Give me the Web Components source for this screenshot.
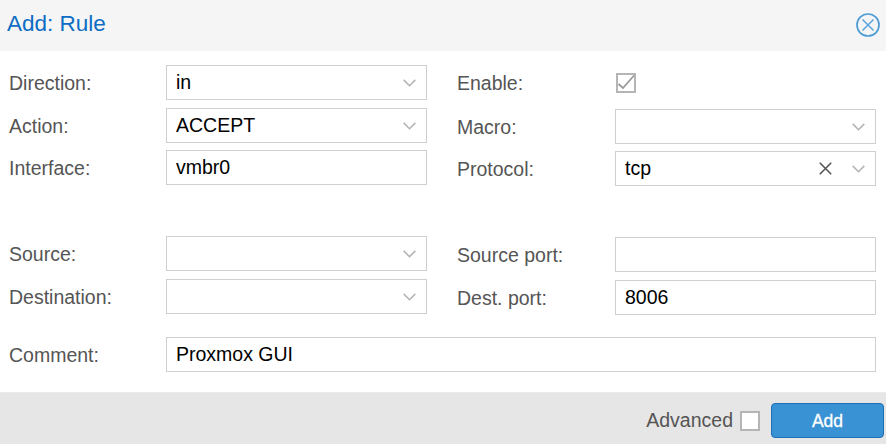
<!DOCTYPE html>
<html>
<head>
<meta charset="utf-8">
<title>Add: Rule</title>
<style>
    html, body { margin: 0; padding: 0; background: #fff; overflow: hidden; }
    body { font-family: "Liberation Sans", Arial, sans-serif; }
</style>
</head>
<body>

<rule-dialog heading="Add: Rule">
    <form-column slot="left">
        <form-field label="Direction:" gap="8"><combo-box value="in"></combo-box></form-field>
        <form-field label="Action:" gap="7"><combo-box value="ACCEPT"></combo-box></form-field>
        <form-field label="Interface:" gap="51"><text-box value="vmbr0"></text-box></form-field>
        <form-field label="Source:" gap="8"><combo-box></combo-box></form-field>
        <form-field label="Destination:" gap="0"><combo-box></combo-box></form-field>
    </form-column>
    <form-column slot="right">
        <form-field label="Enable:" gap="8" tall><check-box checked></check-box></form-field>
        <form-field label="Macro:" gap="7"><combo-box></combo-box></form-field>
        <form-field label="Protocol:" gap="51"><combo-box value="tcp" clearable></combo-box></form-field>
        <form-field label="Source port:" gap="8"><text-box></text-box></form-field>
        <form-field label="Dest. port:" gap="0"><text-box value="8006"></text-box></form-field>
    </form-column>
    <form-field slot="wide" label="Comment:" gap="0"><text-box value="Proxmox GUI"></text-box></form-field>
    <check-box slot="footer" label="Advanced"></check-box>
    <push-button slot="footer">Add</push-button>
</rule-dialog>

<script>
const chevron = `<svg width="13" height="8" viewBox="0 0 13 8"><path d="M.7.9 6.5 6.7 12.3.9" fill="none" stroke="#b4b4b4" stroke-width="1.6"/></svg>`;

class RuleDialog extends HTMLElement {
    constructor() {
        super();
        this.attachShadow({ mode: 'open' });
        this.shadowRoot.innerHTML = `
            <style>
                :host { display: flex; flex-direction: column; width: 886px; height: 444px; background: #fff; font-family: "Liberation Sans", Arial, sans-serif; }
                header { display: flex; align-items: center; justify-content: space-between; height: 51px; flex: none; box-sizing: border-box; padding: 0 6px 3px 7px; background: #f5f5f5; }
                h1 { margin: 0; font-size: 22.5px; font-weight: normal; color: #0d6dc4; }
                header svg { display: block; margin-top: 2px; }
                main { flex: 1; box-sizing: border-box; padding: 14px 10px 0 9px; }
                .cols { display: grid; grid-template-columns: 418px 419px; column-gap: 30px; }
                .wide { margin-top: 22px; }
                footer { display: flex; align-items: center; justify-content: flex-end; gap: 11px; height: 52px; flex: none; box-sizing: border-box; padding: 4px 2px 0 0; background: #e6e6e6; border-top: 1px solid #ececec; }
            </style>
            <header>
                <h1></h1>
                <svg width="24" height="24" viewBox="0 0 24 24"><circle cx="12" cy="12" r="11" fill="none" stroke="#4c9cd6" stroke-width="1.7"/><path d="M6.5 6.5 17.5 17.5M17.5 6.5 6.5 17.5" stroke="#5aa5dc" stroke-width="1.5"/></svg>
            </header>
            <main>
                <div class="cols"><slot name="left"></slot><slot name="right"></slot></div>
                <div class="wide"><slot name="wide"></slot></div>
            </main>
            <footer><slot name="footer"></slot></footer>`;
        this.shadowRoot.querySelector('h1').textContent = this.getAttribute('heading');
    }
}

class FormColumn extends HTMLElement {
    constructor() {
        super();
        this.attachShadow({ mode: 'open' });
        this.shadowRoot.innerHTML = `<style>:host { display: flex; flex-direction: column; }</style><slot></slot>`;
    }
}

class FormField extends HTMLElement {
    constructor() {
        super();
        this.attachShadow({ mode: 'open' });
        this.shadowRoot.innerHTML = `
            <style>
                :host { display: flex; align-items: center; height: 35px; font-size: 19.5px; color: #555; }
                :host([tall]) { height: 36px; }
                label { flex: none; width: 157px; padding-top: 2px; }
                :host([tall]) label { padding-top: 0; }
                ::slotted(*) { flex: 1; }
            </style>
            <label></label><slot></slot>`;
        this.shadowRoot.querySelector('label').textContent = this.getAttribute('label');
        this.style.marginBottom = this.getAttribute('gap') + 'px';
    }
    connectedCallback() {
        if (this.parentElement.getAttribute('slot') === 'right') {
            this.shadowRoot.querySelector('label').style.width = '158px';
        }
    }
}

// shared box for text-box and combo-box
const fieldCss = `
    :host { display: flex; align-items: center; box-sizing: border-box; height: 35px; background: #fff; border: 1px solid #cfcfcf; color: #000; font-size: 19.5px; }
    .val { flex: 1; padding-left: 9px; white-space: pre; }
`;

class TextBox extends HTMLElement {
    constructor() {
        super();
        this.attachShadow({ mode: 'open' });
        this.shadowRoot.innerHTML = `<style>${fieldCss}</style><div class="val"></div>`;
        this.shadowRoot.querySelector('.val').textContent = this.getAttribute('value') || '';
    }
}

class ComboBox extends HTMLElement {
    constructor() {
        super();
        this.attachShadow({ mode: 'open' });
        const clear = this.hasAttribute('clearable')
            ? `<svg class="clear" width="13" height="13" viewBox="0 0 13 13"><path d="M.8.8 12.2 12.2M12.2.8.8 12.2" stroke="#555" stroke-width="1.6"/></svg>`
            : '';
        this.shadowRoot.innerHTML = `
            <style>
                ${fieldCss}
                svg { display: block; flex: none; }
                .arrow { margin-right: 10px; }
                .clear { margin-right: 20px; }
            </style>
            <div class="val"></div>${clear}<span class="arrow">${chevron}</span>`;
        this.shadowRoot.querySelector('.val').textContent = this.getAttribute('value') || '';
    }
}

class CheckBox extends HTMLElement {
    constructor() {
        super();
        this.attachShadow({ mode: 'open' });
        const tick = this.hasAttribute('checked')
            ? `<path d="M2.5 11 7 15 18 2.5" fill="none" stroke="#9a9a9a" stroke-width="1.8"/>`
            : '';
        this.shadowRoot.innerHTML = `
            <style>
                :host { display: inline-flex; align-items: center; gap: 7px; font-size: 19.5px; color: #555; }
                svg { display: block; flex: none; margin-left: 1px; }
                span:empty { display: none; }
                span { margin-right: -1px; }
            </style>
            <span></span>
            <svg width="20" height="20" viewBox="0 0 20 20"><rect x="1" y="1" width="18" height="18" fill="#fff" stroke="#b5b5b5" stroke-width="2"/>${tick}</svg>`;
        this.shadowRoot.querySelector('span').textContent = this.getAttribute('label') || '';
    }
}

class PushButton extends HTMLElement {
    constructor() {
        super();
        this.attachShadow({ mode: 'open' });
        this.shadowRoot.innerHTML = `
            <style>
                :host { display: flex; align-items: center; justify-content: center; box-sizing: border-box; width: 113px; height: 35px; padding-top: 1px; background: #3892d4; border: 1px solid #1e6fb8; border-radius: 4px; color: #fff; font-size: 17.5px; -webkit-text-stroke: .3px #fff; }
            </style>
            <slot></slot>`;
    }
}

customElements.define('rule-dialog', RuleDialog);
customElements.define('form-column', FormColumn);
customElements.define('form-field', FormField);
customElements.define('text-box', TextBox);
customElements.define('combo-box', ComboBox);
customElements.define('check-box', CheckBox);
customElements.define('push-button', PushButton);
</script>
</body>
</html>
